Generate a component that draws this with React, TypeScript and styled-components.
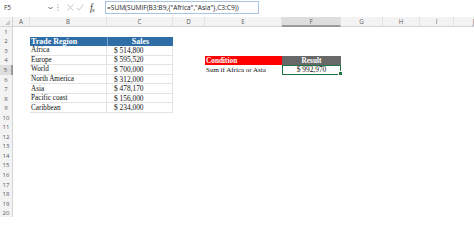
import React from 'react';
import styled, { createGlobalStyle, css } from 'styled-components';

const GlobalStyle = createGlobalStyle`
  html, body {
    margin: 0;
    padding: 0;
    background: #fff;
    overflow: hidden;
  }
`;

type Kind = 'blueHead' | 'blueHeadCenter' | 'tableText' | 'tableValue' | 'redHead' | 'grayHead' | 'plain' | 'selected';

interface CellData {
  text: string;
  kind: Kind;
}

const COLUMNS = [
  { key: 'A', width: 17 },
  { key: 'B', width: 77 },
  { key: 'C', width: 66 },
  { key: 'D', width: 32 },
  { key: 'E', width: 77 },
  { key: 'F', width: 59 },
  { key: 'G', width: 42 },
  { key: 'H', width: 37 },
  { key: 'I', width: 34 },
  { key: 'J', width: 40 },
];
const ROW_COUNT = 20;
const ACTIVE_COL = 'F';
const ACTIVE_ROW = 5;
const FORMULA = '=SUM(SUMIF(B3:B9,{"Africa","Asia"},C3:C9))';

const regions = [
  ['Africa', '$ 514,800'],
  ['Europe', '$ 595,520'],
  ['World', '$ 700,000'],
  ['North America', '$ 312,000'],
  ['Asia', '$ 478,170'],
  ['Pacific coast', '$ 156,000'],
  ['Caribbean', '$ 234,000'],
];

const cells: Record<string, CellData> = {
  B2: { text: 'Trade Region', kind: 'blueHead' },
  C2: { text: 'Sales', kind: 'blueHeadCenter' },
  E4: { text: 'Condition', kind: 'redHead' },
  F4: { text: 'Result', kind: 'grayHead' },
  E5: { text: 'Sum if Africa or Asia', kind: 'plain' },
  F5: { text: '$ 992,970', kind: 'selected' },
};
regions.forEach(([name, sales], i) => {
  cells[`B${i + 3}`] = { text: name, kind: 'tableText' };
  cells[`C${i + 3}`] = { text: sales, kind: 'tableValue' };
});

const Window = styled.div`
  width: 474px;
  height: 217px;
  overflow: hidden;
  background: #fff;
  font-family: "Open Sans", "Noto Sans", sans-serif;
`;

// formula bar
const FormulaBar = styled.div`
  display: flex;
  align-items: center;
  height: 15px;
`;

const NameBox = styled.div`
  width: 46px;
  padding-left: 4px;
  box-sizing: border-box;
  font-size: 6.5px;
  color: #333;
`;

const BarIcon = styled.div<{ $w: number }>`
  width: ${(p) => p.$w}px;
  height: 15px;
  display: flex;
  align-items: center;
  justify-content: center;
`;

const Fx = styled.span`
  font-family: "Liberation Serif", serif;
  font-style: italic;
  font-size: 9.5px;
  color: #333;
  letter-spacing: -0.6px;

  sub {
    font-size: 6px;
    vertical-align: -1px;
  }
`;

const FormulaInput = styled.div`
  margin-left: 6px;
  width: 154px;
  height: 13px;
  box-sizing: border-box;
  border: 1px solid #a9c4e2;
  padding-left: 1px;
  display: flex;
  align-items: center;
  font-size: 6.6px;
  color: #222;
  white-space: nowrap;
  overflow: hidden;
`;

// sheet grid
const Sheet = styled.div`
  margin-top: 2px;
  display: grid;
  grid-template-columns: 13px ${COLUMNS.map((c) => `${c.width}px`).join(' ')};
  grid-template-rows: 10px repeat(${ROW_COUNT}, 9.55px);
`;

const Corner = styled.div`
  background: #f3f3f3;
  border-bottom: 1px solid #d4d4d4;
  border-right: 1px solid #d4d4d4;
  box-sizing: border-box;
  display: flex;
  align-items: flex-end;
  justify-content: flex-end;
  padding: 0 2px 1px 0;
`;

const ColHeader = styled.div<{ $active?: boolean }>`
  background: ${(p) => (p.$active ? '#dedede' : '#f3f3f3')};
  border-bottom: ${(p) => (p.$active ? '2px solid #9a9a9a' : '1px solid #d4d4d4')};
  border-right: 1px solid #e2e2e2;
  box-sizing: border-box;
  display: flex;
  align-items: center;
  justify-content: center;
  font-size: 6.2px;
  color: #5a5a5a;
`;

const RowHeader = styled.div<{ $active?: boolean }>`
  background: ${(p) => (p.$active ? '#dedede' : '#f3f3f3')};
  border-right: ${(p) => (p.$active ? '2px solid #9a9a9a' : '1px solid #d4d4d4')};
  box-sizing: border-box;
  display: flex;
  align-items: center;
  justify-content: center;
  font-size: 6px;
  color: #5a5a5a;
`;

const kindStyles: Record<Kind, ReturnType<typeof css>> = {
  blueHead: css`
    background: #2f6da6;
    color: #fff;
    font-weight: bold;
    font-size: 8px;
    padding-left: 1px;
  `,
  blueHeadCenter: css`
    background: #2f6da6;
    color: #fff;
    font-weight: bold;
    font-size: 8px;
    justify-content: center;
    border-left: 1px solid #7fa3c6;
  `,
  tableText: css`
    font-size: 7.2px;
    padding-left: 1px;
    border-bottom: 1px solid #e3e3e3;
    border-right: 1px solid #e3e3e3;
  `,
  tableValue: css`
    font-size: 7.4px;
    padding-left: 7px;
    border-bottom: 1px solid #e3e3e3;
    border-right: 1px solid #e3e3e3;
  `,
  redHead: css`
    background: #ff0000;
    color: #fff;
    font-weight: bold;
    font-size: 7.3px;
    padding-left: 1px;
  `,
  grayHead: css`
    background: #686868;
    color: #fff;
    font-weight: bold;
    font-size: 7.3px;
    justify-content: center;
  `,
  plain: css`
    font-size: 7px;
    padding-left: 1px;
  `,
  selected: css`
    font-size: 7.4px;
    justify-content: center;
    border: 1.5px solid #217346;
    position: relative;
  `,
};

const Cell = styled.div<{ $kind?: Kind }>`
  box-sizing: border-box;
  display: flex;
  align-items: center;
  white-space: nowrap;
  overflow: visible;
  font-family: "Liberation Serif", "Times New Roman", serif;
  color: #111;
  ${(p) => p.$kind && kindStyles[p.$kind]}
`;

const FillHandle = styled.span`
  position: absolute;
  right: -2.5px;
  bottom: -2.5px;
  width: 3px;
  height: 3px;
  background: #217346;
  border: 0.5px solid #fff;
`;

function FormulaRow() {
  return (
    <FormulaBar>
      <NameBox>F5</NameBox>
      <BarIcon $w={8}>
        <svg width="5" height="4" viewBox="0 0 5 4">
          <path d="M0.5 1 L2.5 3 L4.5 1" fill="none" stroke="#555" strokeWidth="0.9" />
        </svg>
      </BarIcon>
      <BarIcon $w={8}>
        <svg width="2" height="7" viewBox="0 0 2 7">
          <circle cx="1" cy="1" r="0.6" fill="#888" />
          <circle cx="1" cy="3.5" r="0.6" fill="#888" />
          <circle cx="1" cy="6" r="0.6" fill="#888" />
        </svg>
      </BarIcon>
      <BarIcon $w={3} />
      <BarIcon $w={10}>
        <svg width="7" height="7" viewBox="0 0 7 7">
          <path d="M0.5 0.5 L6.5 6.5 M6.5 0.5 L0.5 6.5" stroke="#b5b5b5" strokeWidth="0.8" />
        </svg>
      </BarIcon>
      <BarIcon $w={10}>
        <svg width="8" height="7" viewBox="0 0 8 7">
          <path d="M0.5 3.8 L2.8 6.2 L7.5 0.6" fill="none" stroke="#b5b5b5" strokeWidth="0.8" />
        </svg>
      </BarIcon>
      <BarIcon $w={14}>
        <Fx>
          f<sub>x</sub>
        </Fx>
      </BarIcon>
      <FormulaInput>{FORMULA}</FormulaInput>
    </FormulaBar>
  );
}

export default function App() {
  const rows = Array.from({ length: ROW_COUNT }, (_, i) => i + 1);
  return (
    <>
      <GlobalStyle />
      <Window>
        <FormulaRow />
        <Sheet>
          <Corner>
            <svg width="5" height="5" viewBox="0 0 5 5">
              <path d="M5 0 L5 5 L0 5 Z" fill="#c8c8c8" />
            </svg>
          </Corner>
          {COLUMNS.map((c) => (
            <ColHeader key={c.key} $active={c.key === ACTIVE_COL}>
              {c.key}
            </ColHeader>
          ))}
          {rows.map((r) => (
            <React.Fragment key={r}>
              <RowHeader $active={r === ACTIVE_ROW}>{r}</RowHeader>
              {COLUMNS.map((c) => {
                const data = cells[`${c.key}${r}`];
                return (
                  <Cell key={c.key} $kind={data?.kind}>
                    {data?.text}
                    {data?.kind === 'selected' && <FillHandle />}
                  </Cell>
                );
              })}
            </React.Fragment>
          ))}
        </Sheet>
      </Window>
    </>
  );
}
